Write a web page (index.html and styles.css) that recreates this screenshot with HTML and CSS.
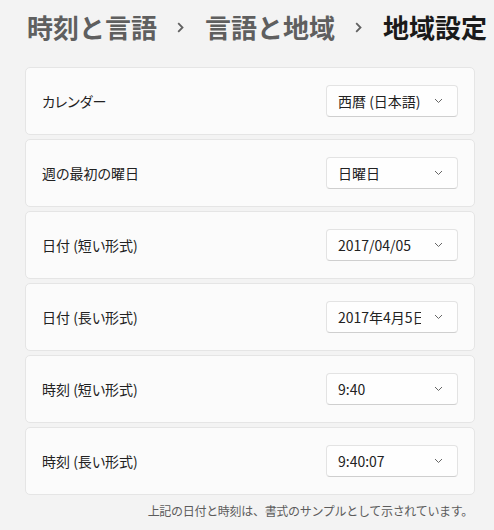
FILE: index.html
```html
<!DOCTYPE html>
<html lang="ja">
<head>
<meta charset="utf-8">
<title>地域設定</title>
<link rel="stylesheet" href="styles.css">
</head>
<body>
<div class="page">
  <h1 class="title">
    <span class="crumb">時刻と言語</span>
    <svg class="sep" width="7" height="11" viewBox="0 0 7 11"><path d="M1.2 1.2 L5.5 5.5 L1.2 9.8" fill="none" stroke="#606060" stroke-width="1.8"/></svg>
    <span class="crumb">言語と地域</span>
    <svg class="sep" width="7" height="11" viewBox="0 0 7 11"><path d="M1.2 1.2 L5.5 5.5 L1.2 9.8" fill="none" stroke="#606060" stroke-width="1.8"/></svg>
    <span class="current">地域設定</span>
  </h1>
  <div class="list">
    <div class="card"><span class="label">カレンダー</span><div class="select"><span class="value">西暦 (日本語)</span><svg class="chev" width="9" height="6" viewBox="0 0 9 6"><path d="M1 1 L4.5 4.5 L8 1" fill="none" stroke="#666" stroke-width="1"/></svg></div></div>
    <div class="card"><span class="label">週の最初の曜日</span><div class="select"><span class="value">日曜日</span><svg class="chev" width="9" height="6" viewBox="0 0 9 6"><path d="M1 1 L4.5 4.5 L8 1" fill="none" stroke="#666" stroke-width="1"/></svg></div></div>
    <div class="card"><span class="label">日付 (短い形式)</span><div class="select"><span class="value">2017/04/05</span><svg class="chev" width="9" height="6" viewBox="0 0 9 6"><path d="M1 1 L4.5 4.5 L8 1" fill="none" stroke="#666" stroke-width="1"/></svg></div></div>
    <div class="card"><span class="label">日付 (長い形式)</span><div class="select"><span class="value">2017年4月5日</span><svg class="chev" width="9" height="6" viewBox="0 0 9 6"><path d="M1 1 L4.5 4.5 L8 1" fill="none" stroke="#666" stroke-width="1"/></svg></div></div>
    <div class="card"><span class="label">時刻 (短い形式)</span><div class="select"><span class="value">9:40</span><svg class="chev" width="9" height="6" viewBox="0 0 9 6"><path d="M1 1 L4.5 4.5 L8 1" fill="none" stroke="#666" stroke-width="1"/></svg></div></div>
    <div class="card"><span class="label">時刻 (長い形式)</span><div class="select"><span class="value">9:40:07</span><svg class="chev" width="9" height="6" viewBox="0 0 9 6"><path d="M1 1 L4.5 4.5 L8 1" fill="none" stroke="#666" stroke-width="1"/></svg></div></div>
  </div>
  <p class="note">上記の日付と時刻は、書式のサンプルとして示されています。</p>
</div>
</body>
</html>
```
FILE: styles.css
```css
html, body {
  margin: 0;
  padding: 0;
  background: #f3f3f3;
}
body {
  font-family: "Noto Sans CJK JP", "Noto Sans", sans-serif;
  color: #1b1b1b;
  width: 494px;
  height: 530px;
  overflow: hidden;
}
.page {
  padding: 0 19px 0 25px;
}
.title {
  margin: 0;
  padding: 10px 0 0 2px;
  height: 67px;
  box-sizing: border-box;
  display: flex;
  align-items: flex-start;
  white-space: nowrap;
  font-size: 26px;
  line-height: 34px;
  font-weight: 700;
}
.crumb {
  color: #5f5f5f;
}
.current {
  color: #1a1a1a;
}
.sep {
  margin: 12px 21px 0 20px;
  flex: none;
}
.list {
  display: flex;
  flex-direction: column;
  gap: 4px;
}
.card {
  height: 68px;
  box-sizing: border-box;
  background: #fbfbfb;
  border: 1px solid #e5e5e5;
  border-radius: 5px;
  display: flex;
  align-items: center;
  justify-content: space-between;
  padding: 0 16px 0 16px;
}
.label {
  font-size: 14px;
  font-feature-settings: "palt";
  color: #222;
}
.select {
  width: 132px;
  height: 32px;
  box-sizing: border-box;
  background: #fefefe;
  border: 1px solid #e3e3e3;
  border-bottom-color: #cfcfcf;
  border-radius: 4px;
  display: flex;
  align-items: center;
  padding: 0 0 0 11px;
}
.value {
  width: 83px;
  overflow: hidden;
  white-space: nowrap;
  font-size: 14px;
  font-feature-settings: "palt";
  color: #222;
}
.chev {
  margin-left: auto;
  margin-right: 14px;
  flex: none;
}
.note {
  margin: 7px 2px 0 0;
  text-align: right;
  font-size: 12px;
  letter-spacing: -0.3px;
  color: #5c5c5c;
  white-space: nowrap;
}
```
